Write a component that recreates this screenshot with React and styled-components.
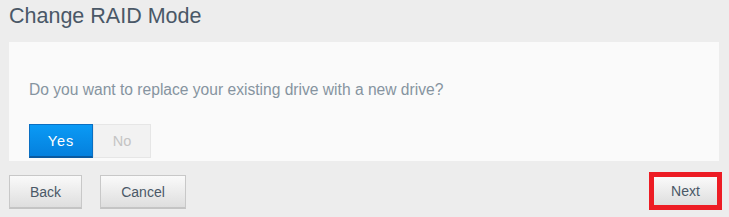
import styled, { createGlobalStyle } from "styled-components";

const Global = createGlobalStyle`
  html, body {
    margin: 0;
    padding: 0;
    background: #ededed;
    font-family: "Liberation Sans", Arial, sans-serif;
  }
`;

const Page = styled.div`
  width: 729px;
  height: 217px;
  box-sizing: border-box;
  padding: 0 10px 0 9px;
  display: flex;
  flex-direction: column;
`;

const Title = styled.h1`
  margin: 0;
  padding-top: 4px;
  height: 42px;
  box-sizing: border-box;
  font-size: 21.5px;
  line-height: 25px;
  font-weight: normal;
  color: #4a5867;
`;

const Panel = styled.div`
  background: #fafafa;
  height: 119px;
  box-sizing: border-box;
  padding: 39px 0 0 20px;
  display: flex;
  flex-direction: column;
`;

const Question = styled.p`
  margin: 0 0 25px;
  font-size: 15.6px;
  line-height: 18px;
  color: #8694a0;
`;

const Toggle = styled.div`
  display: flex;
`;

const ToggleButton = styled.button`
  height: 34px;
  width: ${(p) => p.$w}px;
  box-sizing: border-box;
  font-family: inherit;
  font-size: 14.5px;
  letter-spacing: ${(p) => (p.$active ? "1px" : "0")};
  border: 1px solid ${(p) => (p.$active ? "#0a6fc2" : "#e6e6e6")};
  background: ${(p) =>
    p.$active ? "linear-gradient(#0a9af5, #0580dd)" : "#f2f2f2"};
  color: ${(p) => (p.$active ? "#ffffff" : "#c4c4c4")};
  border-bottom-width: ${(p) => (p.$active ? 2 : 1)}px;
  border-bottom-color: ${(p) => (p.$active ? "#0a5aa0" : "#e6e6e6")};
  padding: 0;
`;

const Footer = styled.div`
  display: flex;
  align-items: center;
  gap: 18px;
  margin-top: 13px;
`;

const Button = styled.button`
  height: 34px;
  width: ${(p) => p.$w}px;
  box-sizing: border-box;
  font-family: inherit;
  font-size: 14px;
  color: #4a5867;
  background: linear-gradient(#fafafa, #dedede);
  border: 1px solid #c8c8c8;
  border-bottom: 2px solid #c4c4c4;
  padding: 0;
`;

const NextButton = styled(Button)`
  margin-left: auto;
  margin-right: -3px;
  height: 38px;
  width: 73px;
  border: 5px solid #ed1c24;
  margin-top: -2px;
`;

export default function App() {
  return (
    <>
      <Global />
      <Page>
        <Title>Change RAID Mode</Title>
        <Panel>
          <Question>Do you want to replace your existing drive with a new drive?</Question>
          <Toggle>
            <ToggleButton $active $w={64}>Yes</ToggleButton>
            <ToggleButton $w={58}>No</ToggleButton>
          </Toggle>
        </Panel>
        <Footer>
          <Button $w={73}>Back</Button>
          <Button $w={86}>Cancel</Button>
          <NextButton>Next</NextButton>
        </Footer>
      </Page>
    </>
  );
}
